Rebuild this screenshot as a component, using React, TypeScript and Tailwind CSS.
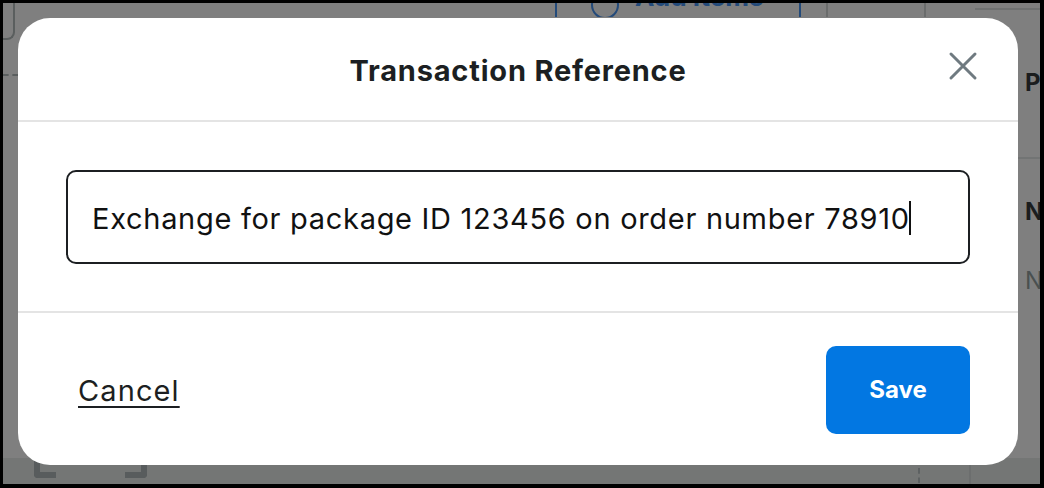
import React from "react";

function Backdrop() {
  return (
    <div className="w-full h-full flex bg-[#7f7f7f]">
      {/* left edge of page */}
      <div className="w-[15px] flex flex-col">
        <div className="w-[12px] h-[37px] border-r-2 border-b-2 border-[#5a5e5e] rounded-br-[8px]" />
        <div className="mt-[34px] w-[15px] border-t-2 border-dashed border-[#5a5e5e]" />
        <div className="flex-1" />
        <div className="h-[26px] bg-[#747675]" />
      </div>
      {/* middle of page */}
      <div className="flex-1 flex flex-col">
        <div className="h-[14px] flex items-stretch">
          <div className="w-[537px]" />
          <div className="w-[246px] border-x-2 border-[#234a7a] flex items-end gap-[16px] pl-[34px] overflow-hidden">
            <div className="w-[28px] h-[28px] shrink-0 rounded-full border-2 border-[#234a7a] mb-[-2px]" />
            <span className="text-[#234a7a] text-[26px] font-bold leading-none mb-[7px] whitespace-nowrap">Add Items</span>
          </div>
          <div className="w-[25px]" />
          <div className="w-[2px] bg-[#6a6c6c]" />
          <div className="w-[96px]" />
          <div className="w-[2px] bg-[#6a6c6c]" />
          <div className="flex-1 flex flex-col pt-[5px] pl-[49px]">
            <div className="h-[2px] bg-[#6f7171]" />
          </div>
        </div>
        <div className="flex-1" />
        <div className="h-[26px] bg-[#747675] flex">
          <div className="ml-[16px] w-[22px] h-[20px] border-l-[6px] border-b-[6px] border-[#585c5d] rounded-bl-[4px]" />
          <div className="ml-[69px] w-[22px] h-[20px] border-r-[6px] border-b-[6px] border-[#585c5d] rounded-br-[4px]" />
          <div className="ml-[771px] mt-[10px] h-[15px] border-l-2 border-dashed border-[#5d6162]" />
          <div className="ml-[49px] w-[2px] mt-[5px] bg-[#6c6e6e]" />
        </div>
      </div>
      {/* right edge of page */}
      <div className="w-[22px] flex flex-col overflow-hidden">
        <div className="mt-[5px] h-[2px] bg-[#6f7171]" />
        <span className="mt-[61px] pl-[7px] text-[24px] font-bold text-[#1b1d1e] leading-none">P</span>
        <div className="mt-[62px] h-[2px] bg-[#727474]" />
        <span className="mt-[41px] pl-[7px] text-[24px] font-bold text-[#1b1d1e] leading-none">N</span>
        <span className="mt-[45px] pl-[7px] text-[24px] text-[#4a5050] leading-none">N</span>
        <div className="flex-1" />
        <div className="h-[26px] bg-[#747675]" />
      </div>
    </div>
  );
}

export default function App() {
  return (
    <div
      className="w-[1044px] h-[488px] bg-black pt-[3px] pl-[3px] pr-[4px] pb-[4px]"
      style={{ fontFamily: "Inter, 'Noto Sans', sans-serif" }}
    >
      <div className="relative w-full h-full overflow-hidden">
        <Backdrop />

        {/* modal overlay */}
        <div className="absolute left-[15px] top-[15px] w-[1000px] h-[447px] bg-white rounded-[32px] flex flex-col text-[#1c1f22]">
          <div className="relative h-[104px] border-b-2 border-[#e4e4e4] flex items-center justify-center shrink-0 pt-[3px]">
            <h1 className="text-[29px] font-bold leading-none tracking-[0.8px]">Transaction Reference</h1>
            <button className="absolute right-[40px] top-[33px] w-[30px] h-[30px] flex items-center justify-center">
              <svg width="30" height="30" viewBox="0 0 30 30" fill="none">
                <path d="M3 3L27 27M27 3L3 27" stroke="#6f7a80" strokeWidth="3" strokeLinecap="round" />
              </svg>
            </button>
          </div>
          <div className="h-[191px] border-b-2 border-[#e4e4e4] px-[48px] flex items-center shrink-0">
            <div className="w-full h-[94px] border-2 border-[#1c1f22] rounded-[10px] flex items-center pl-[24px] pt-[3px]">
              <span className="text-[29px] leading-none text-[#111] tracking-[0.7px] whitespace-nowrap">
                Exchange for package ID 123456 on order number 78910
              </span>
              <span className="w-[2px] h-[34px] bg-[#111] ml-[-1px]" />
            </div>
          </div>
          <div className="flex-1 flex items-center justify-between pl-[60px] pr-[48px] pt-[2px]">
            <button className="text-[29px] leading-none underline decoration-2 underline-offset-[5px] text-[#1c1f22] tracking-[1.1px]">
              Cancel
            </button>
            <button className="w-[144px] h-[88px] rounded-[10px] bg-[#0277e2] text-white text-[24px] font-bold">
              Save
            </button>
          </div>
        </div>
      </div>
    </div>
  );
}
